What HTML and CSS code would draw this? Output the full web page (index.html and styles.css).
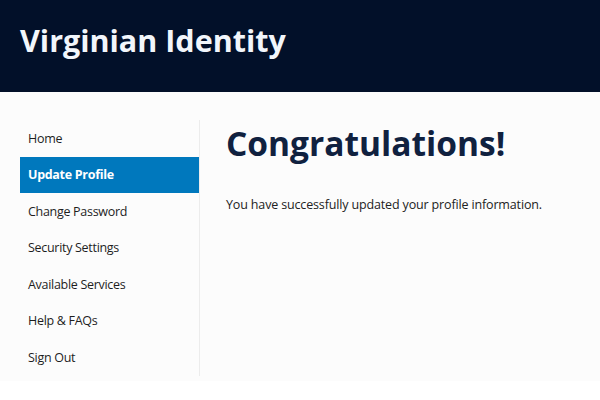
FILE: index.html
```html
<!DOCTYPE html>
<html lang="en">
<head>
<meta charset="utf-8">
<title>Virginian Identity</title>
<link rel="stylesheet" href="styles.css">
</head>
<body>
<header class="site-header">
  <h1 class="brand">Virginian Identity</h1>
</header>
<div class="layout">
  <nav class="sidebar">
    <a class="nav-item" href="#">Home</a>
    <a class="nav-item active" href="#">Update Profile</a>
    <a class="nav-item" href="#">Change Password</a>
    <a class="nav-item" href="#">Security Settings</a>
    <a class="nav-item" href="#">Available Services</a>
    <a class="nav-item" href="#">Help &amp; FAQs</a>
    <a class="nav-item" href="#">Sign Out</a>
  </nav>
  <main class="content">
    <h2 class="title">Congratulations!</h2>
    <p class="message">You have successfully updated your profile information.</p>
  </main>
</div>
</body>
</html>
```
FILE: styles.css
```css
* { box-sizing: border-box; }
html, body { margin: 0; padding: 0; background: #ffffff; }
body { font-family: "Open Sans", "Noto Sans", sans-serif; color: #1b1b1b; }

.site-header {
  height: 92px;
  background: #021029;
  padding: 19px 20px 0;
}
.brand {
  margin: 0;
  color: #f2f6fb;
  font-size: 30.5px;
  font-weight: 700;
  line-height: normal;
}

.layout {
  background: #fcfcfc;
  display: flex;
  padding: 28px 20px 5px;
}
.sidebar {
  width: 180px;
  flex: none;
  border-right: 1px solid #ececec;
  display: flex;
  flex-direction: column;
}
.nav-item {
  display: flex;
  align-items: center;
  height: 36.5px;
  padding-left: 8px;
  font-size: 12.5px;
  letter-spacing: -0.3px;
  color: #1e1e1e;
  text-decoration: none;
}
.nav-item.active {
  background: #0078bd;
  color: #ffffff;
  font-weight: 700;
}

.content {
  padding-left: 26px;
}
.title {
  margin: 0;
  font-size: 33.5px;
  font-weight: 700;
  color: #10213f;
  line-height: normal;
}
.message {
  margin: 30px 0 0;
  font-size: 12.5px;
  letter-spacing: -0.15px;
  color: #222222;
  line-height: normal;
}
```
